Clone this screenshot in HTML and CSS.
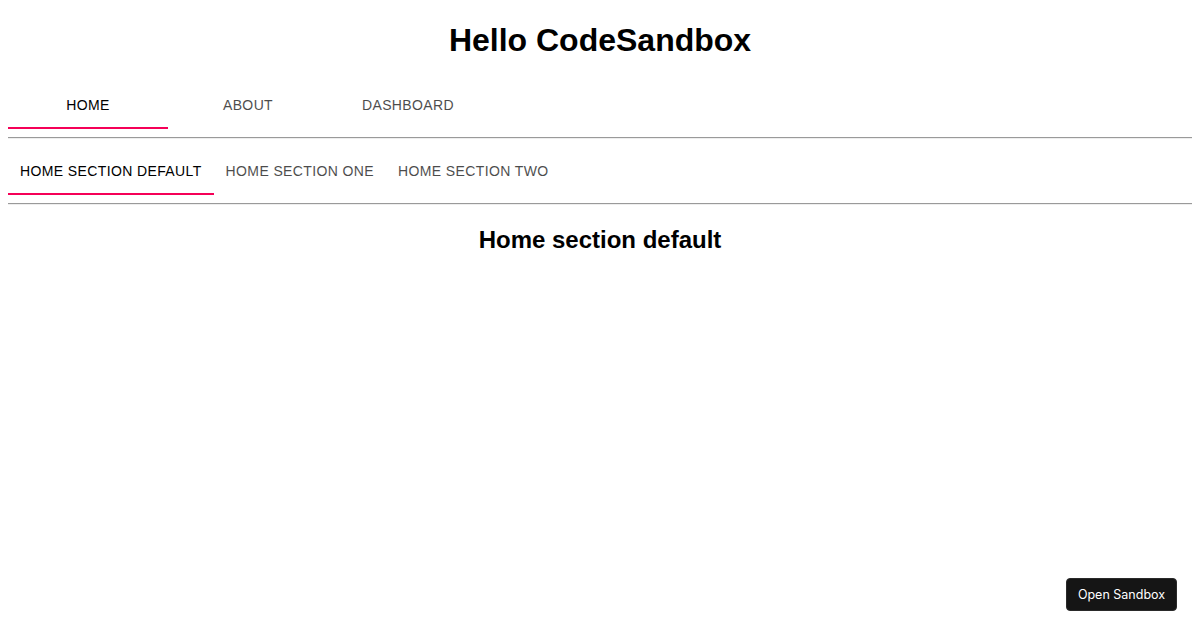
FILE: index.html
```html
<!DOCTYPE html>
<html>
<head>
<meta charset="utf-8">
<link rel="stylesheet" href="styles.css">
</head>
<body>
<div class="app">
  <h1 class="title">Hello CodeSandbox</h1>
  <div class="tabs">
    <div class="tab tab-fixed selected">Home</div>
    <div class="tab tab-fixed">About</div>
    <div class="tab tab-fixed">Dashboard</div>
  </div>
  <hr class="divider">
  <div class="tabs">
    <div class="tab selected">Home section default</div>
    <div class="tab">Home section one</div>
    <div class="tab">Home section two</div>
  </div>
  <hr class="divider">
  <h2 class="section-title">Home section default</h2>
</div>
<a class="open-sandbox">Open Sandbox</a>
</body>
</html>
```
FILE: styles.css
```css
body {
  margin: 0;
  padding: 0 8px;
  font-family: "Liberation Sans", Arial, sans-serif;
  background: #fff;
  color: #000;
}
.app {
  text-align: center;
  padding-top: 1px;
}
.title {
  font-size: 32px;
  font-weight: bold;
  margin: 21.44px 0;
}
.tabs {
  display: flex;
  min-height: 48px;
}
.tab {
  box-sizing: border-box;
  min-height: 48px;
  padding: 7px 12px 5px;
  display: flex;
  align-items: center;
  justify-content: center;
  font-family: "Liberation Sans", Arial, sans-serif;
  font-size: 14px;
  font-weight: 400;
  line-height: 1.75;
  letter-spacing: 0.38px;
  text-transform: uppercase;
  color: #000;
  opacity: 0.7;
  border-bottom: 2px solid transparent;
  white-space: nowrap;
}
.tab-fixed {
  min-width: 160px;
}
.tab.selected {
  opacity: 1;
  border-bottom-color: #f50057;
}
.divider {
  margin: 8px 0;
  border: 0;
  border-top: 1px solid #9a9a9a;
  border-bottom: 1px solid #eeeeee;
}
.section-title {
  font-size: 24px;
  font-weight: bold;
  margin: 21.5px 0 19.92px;
}
.open-sandbox {
  position: fixed;
  right: 23px;
  bottom: 19px;
  width: 111px;
  height: 33px;
  box-sizing: border-box;
  display: flex;
  align-items: center;
  justify-content: center;
  background: #151515;
  color: #fff;
  border: 1px solid #2a2a2a;
  border-radius: 4px;
  font-family: Inter, "Liberation Sans", sans-serif;
  font-size: 12.5px;
}
```
